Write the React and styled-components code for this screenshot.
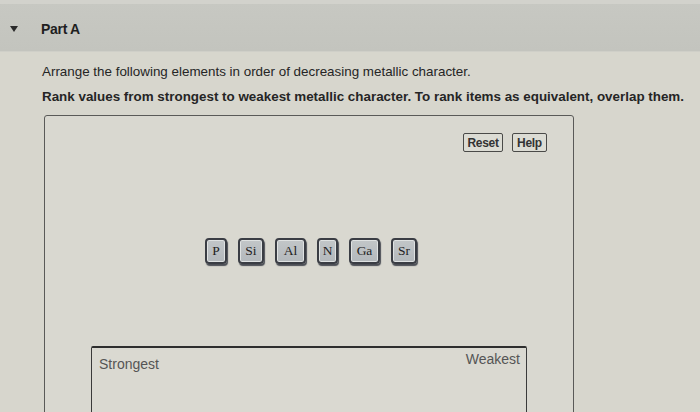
import React from "react";
import styled, { createGlobalStyle } from "styled-components";

const Global = createGlobalStyle`
  html, body { margin: 0; padding: 0; }
  body {
    width: 700px; height: 412px; overflow: hidden;
    background: #d6d5cc;
    font-family: "Liberation Sans", Arial, sans-serif;
  }
`;

const Page = styled.div`
  width: 700px;
  height: 412px;
  overflow: hidden;
  background: #d7d6cd;
`;

const Header = styled.div`
  height: 52px;
  box-sizing: border-box;
  border-top: 4px solid #d2d2cc;
  border-bottom: 1px solid #cfcfc8;
  background: linear-gradient(#c7c8c2, #c3c4be);
  display: flex;
  align-items: center;
  padding-left: 10px;
  gap: 23px;
`;

const Caret = styled.span`
  width: 0;
  height: 0;
  border-left: 4.5px solid transparent;
  border-right: 4.5px solid transparent;
  border-top: 6px solid #2a2a2a;
  margin-top: 2px;
`;

const Title = styled.h2`
  margin: 0;
  font-size: 14px;
  font-weight: bold;
  color: #1f1f1f;
  letter-spacing: -0.3px;
  padding-top: 2px;
`;

const Body = styled.div`
  padding: 12px 0 0 42px;
`;

const Para = styled.p`
  margin: 0 0 ${p => p.$mb || 0}px 0;
  font-size: 13.4px;
  line-height: 16px;
  color: #252525;
  font-weight: ${p => (p.$bold ? "bold" : "normal")};
  letter-spacing: 0;
`;

const Outer = styled.div`
  margin-left: 2px;
  margin-top: 10px;
  width: 530px;
  height: 320px;
  box-sizing: border-box;
  border: 1px solid #5a5a58;
  border-radius: 3px;
  background: #d9d8d0;
  display: flex;
  flex-direction: column;
  align-items: center;
`;

const ButtonBar = styled.div`
  align-self: stretch;
  display: flex;
  justify-content: flex-end;
  gap: 9px;
  padding: 17px 26px 0 0;
`;

const Btn = styled.button`
  height: 19px;
  width: ${p => p.$w}px;
  padding: 0;
  box-sizing: border-box;
  border: 1.5px solid #4a4a48;
  border-radius: 2px;
  background: #dcdcd4;
  color: #333;
  font-family: "Liberation Sans", Arial, sans-serif;
  font-size: 12px;
  font-weight: bold;
  letter-spacing: -0.3px;
`;

const Tiles = styled.div`
  margin-top: 86px;
  margin-left: 4px;
  display: flex;
  gap: ${p => p.$gap}px;
  align-items: center;
`;

const Tile = styled.div`
  width: ${p => p.$w}px;
  height: 26px;
  box-sizing: border-box;
  border: 2px solid #3a3d44;
  border-radius: 4px;
  background: linear-gradient(#c2c6c8, #b3b8bc);
  box-shadow: 1px 2px 1px #4b4e55, inset 0 0 0 1px #dfe2e2;
  display: flex;
  align-items: center;
  justify-content: center;
  font-family: "Liberation Serif", "Times New Roman", serif;
  font-size: 13.5px;
  color: #222;
`;

const Ranking = styled.div`
  margin-top: 82px;
  width: 436px;
  flex: 1;
  box-sizing: border-box;
  border: 1.5px solid #3a3a3a;
  border-top: 2px solid #2e2e2e;
  border-bottom: none;
  border-radius: 2px 2px 0 0;
  background: #dad9d1;
  display: flex;
  justify-content: space-between;
  align-items: flex-start;
  padding: 3px 6px 0 7px;
`;

const Label = styled.span`
  font-size: 14px;
  color: #555;
  margin-top: ${p => p.$mt || 0}px;
`;

const tiles = [
  { t: "P", w: 22 },
  { t: "Si", w: 26 },
  { t: "Al", w: 31 },
  { t: "N", w: 21 },
  { t: "Ga", w: 31 },
  { t: "Sr", w: 26 },
];

export default function App() {
  return (
    <Page>
      <Global />
      <Header>
        <Caret />
        <Title>Part A</Title>
      </Header>
      <Body>
        <Para $mb={9}>Arrange the following elements in order of decreasing metallic character.</Para>
        <Para $bold>Rank values from strongest to weakest metallic character. To rank items as equivalent, overlap them.</Para>
        <Outer>
          <ButtonBar>
            <Btn $w={40}>Reset</Btn>
            <Btn $w={35}>Help</Btn>
          </ButtonBar>
          <Tiles $gap={11}>
            {tiles.map(x => (
              <Tile key={x.t} $w={x.w}>{x.t}</Tile>
            ))}
          </Tiles>
          <Ranking>
            <Label $mt={5}>Strongest</Label>
            <Label>Weakest</Label>
          </Ranking>
        </Outer>
      </Body>
    </Page>
  );
}
